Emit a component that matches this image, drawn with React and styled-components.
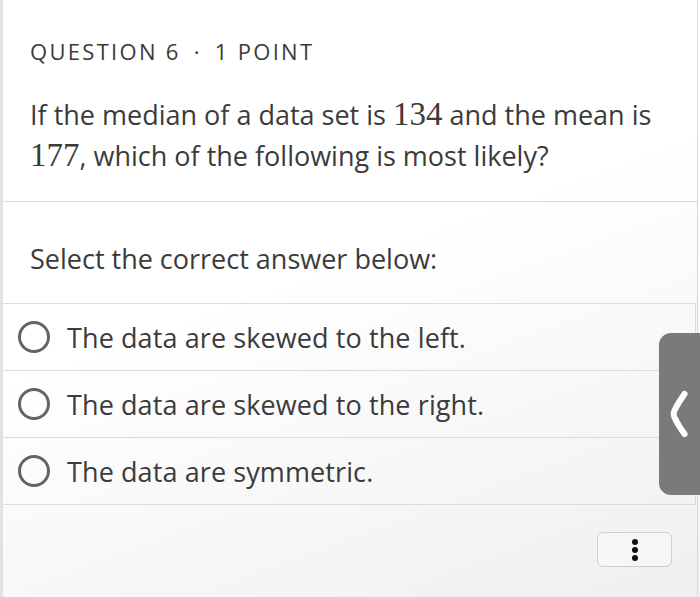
import React from "react";
import styled, { createGlobalStyle } from "styled-components";

const GlobalStyle = createGlobalStyle`
  html, body { margin: 0; padding: 0; }
  body {
    width: 700px;
    height: 597px;
    overflow: hidden;
    font-family: "Open Sans", "Noto Sans", sans-serif;
    color: #3b3b3b;
    background: #ffffff;
  }
`;

const Page = styled.div`
  position: relative;
  width: 700px;
  height: 597px;
  box-sizing: border-box;
  border-left: 3px solid #e2e2e2;
  background: linear-gradient(160deg, #ffffff 0%, #ffffff 45%, #efefef 100%);
  overflow: hidden;
`;

const Card = styled.div`
  width: 695px;
  height: 100%;
  box-sizing: border-box;
  border-right: 1px solid #d9d9d9;
  display: flex;
  flex-direction: column;
`;

const Head = styled.section`
  padding: 39px 0 25px 27px;
  border-bottom: 1px solid #dcdcdc;
`;

const Label = styled.div`
  font-size: 22px;
  line-height: 24px;
  letter-spacing: 2.3px;
  color: #3a3a3a;
  margin-bottom: 31px;
  white-space: nowrap;
`;

const Sep = styled.span`
  margin: 0 5px;
`;

const Question = styled.p`
  margin: 0;
  font-size: 27px;
  line-height: 41px;
  color: #3b3b3b;
`;

const Num = styled.span`
  font-family: "Liberation Serif", "Times New Roman", serif;
  font-size: 33px;
  line-height: 1;
`;

const Prompt = styled.section`
  padding: 42px 0 29px 27px;
  font-size: 27px;
  line-height: 30px;
  border-bottom: 1px solid #dcdcdc;
`;

const Options = styled.ul`
  list-style: none;
  margin: 0;
  padding: 0;
  width: 692px;
  border-right: 1px solid #d9d9d9;
`;

const Option = styled.li`
  height: 66px;
  display: flex;
  align-items: center;
  gap: 17px;
  padding-left: 15px;
  border-bottom: 1px solid #dcdcdc;
  font-size: 27px;
  letter-spacing: 0.1px;
  color: #3b3b3b;
`;

const Radio = styled.span`
  width: 26px;
  height: 26px;
  border: 3px solid #646464;
  border-radius: 50%;
  flex: none;
`;

const Footer = styled.div`
  display: flex;
  justify-content: flex-end;
  padding: 27px 25px 0 0;
`;

const MoreButton = styled.button`
  width: 75px;
  height: 35px;
  box-sizing: border-box;
  border: 1.5px solid #cfcfcf;
  border-radius: 6px;
  background: rgba(255, 255, 255, 0.4);
  display: flex;
  align-items: center;
  justify-content: center;
  padding: 0;
`;

const Tab = styled.div`
  position: absolute;
  right: 0;
  top: 333px;
  width: 41px;
  height: 162px;
  background: #7a7a7a;
  border-radius: 12px 0 0 12px;
  display: flex;
  align-items: center;
  justify-content: center;
`;

export default function App() {
  const options = [
    "The data are skewed to the left.",
    "The data are skewed to the right.",
    "The data are symmetric.",
  ];
  return (
    <>
      <GlobalStyle />
      <Page>
        <Card>
          <Head>
            <Label>
              QUESTION 6 <Sep>·</Sep> 1 POINT
            </Label>
            <Question>
              If the median of a data set is <Num>134</Num> and the mean is{" "}
              <Num>177</Num>, which of the following is most likely?
            </Question>
          </Head>
          <Prompt>Select the correct answer below:</Prompt>
          <Options>
            {options.map((o) => (
              <Option key={o}>
                <Radio />
                {o}
              </Option>
            ))}
          </Options>
          <Footer>
            <MoreButton aria-label="More">
              <svg width="8" height="24" viewBox="0 0 8 24">
                <circle cx="4" cy="4" r="3" fill="#111" />
                <circle cx="4" cy="12" r="3" fill="#111" />
                <circle cx="4" cy="20" r="3" fill="#111" />
              </svg>
            </MoreButton>
          </Footer>
        </Card>
        <Tab>
          <svg width="20" height="48" viewBox="0 0 20 48">
            <path
              d="M14.5 4 Q 8 13 4.5 20.5 Q 3 24 4.5 27.5 Q 8 35 14.5 44"
              fill="none"
              stroke="#fff"
              strokeWidth="6"
              strokeLinecap="round"
              strokeLinejoin="round"
            />
          </svg>
        </Tab>
      </Page>
    </>
  );
}
